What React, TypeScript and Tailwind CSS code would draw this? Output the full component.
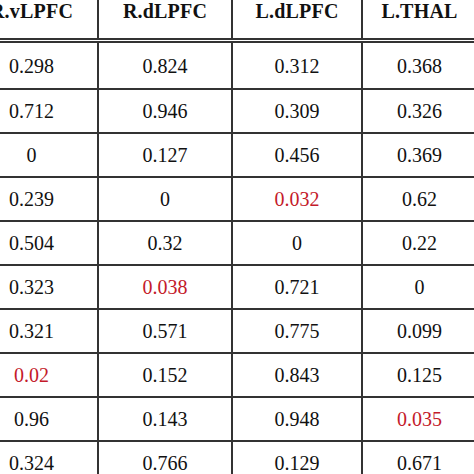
const headers = ["R.vLPFC", "R.dLPFC", "L.dLPFC", "L.THAL"]

// [value, highlighted]
const rows: [string, boolean][][] = [
  [["0.298", false], ["0.824", false], ["0.312", false], ["0.368", false]],
  [["0.712", false], ["0.946", false], ["0.309", false], ["0.326", false]],
  [["0", false], ["0.127", false], ["0.456", false], ["0.369", false]],
  [["0.239", false], ["0", false], ["0.032", true], ["0.62", false]],
  [["0.504", false], ["0.32", false], ["0", false], ["0.22", false]],
  [["0.323", false], ["0.038", true], ["0.721", false], ["0", false]],
  [["0.321", false], ["0.571", false], ["0.775", false], ["0.099", false]],
  [["0.02", true], ["0.152", false], ["0.843", false], ["0.125", false]],
  [["0.96", false], ["0.143", false], ["0.948", false], ["0.035", true]],
  [["0.324", false], ["0.766", false], ["0.129", false], ["0.671", false]],
]

// column widths incl. right rule
const cols = ["w-[133px] border-r-2", "w-[134px] border-r-2", "w-[130px] border-r-2", "w-[113px]"]

export default function App() {
  return (
    <div className="w-[474px] h-[474px] overflow-hidden bg-white text-[#111]" style={{ fontFamily: '"Liberation Serif", "Times New Roman", serif' }}>
      <div className="ml-[-34px] w-[510px]">
        {/* header */}
        <div className="flex h-[38px]">
          {headers.map((h, i) => (
            <div key={h} className={`${cols[i]} border-[#333] flex justify-center items-start text-[20px] leading-[22px] font-bold tracking-[0.2px]`}>
              {h}
            </div>
          ))}
        </div>
        {/* double rule */}
        <div className="h-[5px] border-y-2 border-[#333]" />

        {rows.map((r, ri) => (
          <div key={ri} className={`flex border-b-2 border-[#333] ${ri === 0 ? "h-[47px]" : "h-[44px]"}`}>
            {r.map(([v, red], ci) => (
              <div
                key={ci}
                className={`${cols[ci]} border-[#333] flex items-center justify-center text-[20px] ${red ? "text-[#c41a2a]" : ""}`}
              >
                {v}
              </div>
            ))}
          </div>
        ))}
      </div>
    </div>
  )
}
